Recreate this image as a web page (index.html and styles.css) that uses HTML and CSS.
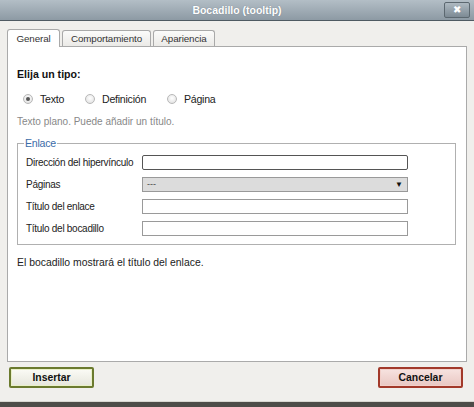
FILE: index.html
```html
<!DOCTYPE html>
<html lang="es">
<head>
<meta charset="utf-8">
<link rel="stylesheet" href="styles.css">
</head>
<body>
<div class="dialog">
  <div class="titlebar">
    <span class="title">Bocadillo (tooltip)</span>
    <span class="close">&#x2716;</span>
  </div>
  <div class="body">
    <div class="tabs">
      <div class="tab active">General</div>
      <div class="tab t2">Comportamiento</div>
      <div class="tab t3">Apariencia</div>
    </div>
    <div class="panel">
      <div class="heading">Elija un tipo:</div>
      <div class="radios">
        <label class="radio"><span class="dot checked"></span>Texto</label>
        <label class="radio"><span class="dot"></span>Definición</label>
        <label class="radio"><span class="dot"></span>Página</label>
      </div>
      <div class="hint">Texto plano. Puede añadir un título.</div>
      <fieldset class="group">
        <legend>Enlace</legend>
        <div class="row"><span class="lbl">Dirección del hipervínculo</span><span class="input focus"></span></div>
        <div class="row"><span class="lbl">Páginas</span><span class="select"><span>---</span><span class="arrow">&#9660;</span></span></div>
        <div class="row"><span class="lbl">Título del enlace</span><span class="input"></span></div>
        <div class="row"><span class="lbl">Título del bocadillo</span><span class="input"></span></div>
      </fieldset>
      <div class="note">El bocadillo mostrará el título del enlace.</div>
    </div>
    <div class="buttons">
      <button class="btn ok">Insertar</button>
      <button class="btn cancel">Cancelar</button>
    </div>
  </div>
  <div class="footer"></div>
</div>
</body>
</html>
```
FILE: styles.css
```css
* { box-sizing: border-box; }
html, body { margin: 0; padding: 0; }
body {
  width: 474px;
  height: 407px;
  overflow: hidden;
  font-family: "Liberation Sans", Arial, sans-serif;
  font-size: 10.2px;
  color: #222;
  background: #f0efec;
}
.dialog {
  width: 474px;
  height: 407px;
  display: flex;
  flex-direction: column;
}
.titlebar {
  height: 21px;
  flex: none;
  background: linear-gradient(#b3bec6, #8d9aa4);
  border-bottom: 1px solid #4f5a62;
  display: flex;
  align-items: center;
  justify-content: center;
  position: relative;
}
.title {
  color: #fff;
  font-weight: bold;
  font-size: 10.5px;
  text-shadow: 0 0 1px #6a7680;
}
.close {
  position: absolute;
  right: 4px;
  top: 2px;
  width: 26px;
  height: 16px;
  border: 1px solid #5c6870;
  border-radius: 2px;
  background: linear-gradient(#aeb9c1, #7d8a94);
  color: #fff;
  font-size: 10px;
  line-height: 14px;
  text-align: center;
}
.body {
  flex: 1;
  padding: 8px 7px 0 7px;
  display: flex;
  flex-direction: column;
}
.tabs {
  display: flex;
  align-items: flex-end;
  gap: 2px;
  height: 17px;
  position: relative;
  z-index: 1;
}
.tab {
  height: 16px;
  border: 1px solid #a9a9a9;
  border-bottom: none;
  border-radius: 3px 3px 0 0;
  background: linear-gradient(#fbfbfa, #ebeae7);
  line-height: 15px;
  color: #333;
  text-align: center;
  font-size: 9.8px;
  letter-spacing: -0.1px;
}
.tab.active {
  width: 53px;
  height: 18px;
  background: #fff;
  line-height: 18px;
  margin-bottom: -1px;
}
.tab.t2 { width: 89px; }
.tab.t3 { width: 62px; }
.panel {
  height: 316px;
  background: #fff;
  border: 1px solid #aaa;
  padding: 21px 10px 0 9px;
  display: flex;
  flex-direction: column;
}
.heading {
  font-weight: bold;
  color: #111;
  height: 13px;
  font-size: 10.6px;
}
.radios {
  display: flex;
  margin-top: 11px;
  padding-left: 6px;
  height: 14px;
  align-items: center;
}
.radio {
  display: flex;
  align-items: center;
  color: #222;
  font-size: 10.6px;
  letter-spacing: -0.25px;
}
.radio:nth-child(1) { width: 62px; }
.radio:nth-child(2) { width: 82px; }
.dot {
  width: 10px;
  height: 10px;
  border-radius: 50%;
  border: 1px solid #b8b8b8;
  background: radial-gradient(circle at 50% 40%, #fff, #dcdcdc);
  margin-right: 7px;
  position: relative;
}
.dot.checked::after {
  content: "";
  position: absolute;
  left: 2px; top: 2px;
  width: 4px; height: 4px;
  border-radius: 50%;
  background: #555;
}
.hint {
  color: #888;
  margin-top: 10px;
  height: 14px;
  font-size: 10px;
}
.group {
  margin: 7px 0 0 0;
  width: 439px;
  border: 1px solid #b0b0b0;
  padding: 2px 0 5px 8px;
}
.group legend {
  color: #3b6ba8;
  padding: 0 1px;
  margin-left: -2px;
  font-size: 10.6px;
  letter-spacing: -0.25px;
}
.row {
  display: flex;
  align-items: center;
  height: 22px;
}
.lbl {
  width: 116px;
  flex: none;
  color: #222;
  font-size: 10px;
  letter-spacing: -0.28px;
}
.input, .select {
  width: 266px;
  height: 15px;
  border: 1px solid #9a9a9a;
  background: #fff;
}
.input.focus {
  border-color: #555;
  border-radius: 2px;
}
.select {
  background: #dcdcdc;
  border-color: #999;
  display: flex;
  justify-content: space-between;
  align-items: center;
  padding: 0 4px;
  font-size: 9px;
  color: #444;
}
.arrow { font-size: 8px; color: #111; }
.note {
  margin-top: 12px;
  color: #222;
  font-size: 10.4px;
}
.buttons {
  display: flex;
  justify-content: space-between;
  padding: 5px 4px 0 2px;
}
.btn {
  width: 85px;
  height: 21px;
  font-family: "Liberation Sans", Arial, sans-serif;
  font-size: 10.4px;
  font-weight: bold;
  color: #111;
  border-radius: 2px;
  padding: 0;
}
.btn.ok {
  border: 2px solid #6b7a2e;
  background: linear-gradient(#fbfbf6, #e6e6dc);
  box-shadow: inset 0 0 0 1px #e9f0c8;
}
.btn.cancel {
  border: 2px solid #a2392a;
  background: linear-gradient(#f7e3e0, #e9c7c2);
  box-shadow: inset 0 0 0 1px #f2d0ca;
}
.footer {
  height: 6px;
  flex: none;
  border-top: 1px solid #d8d6d0;
  background: #4d4c48;
}
```
